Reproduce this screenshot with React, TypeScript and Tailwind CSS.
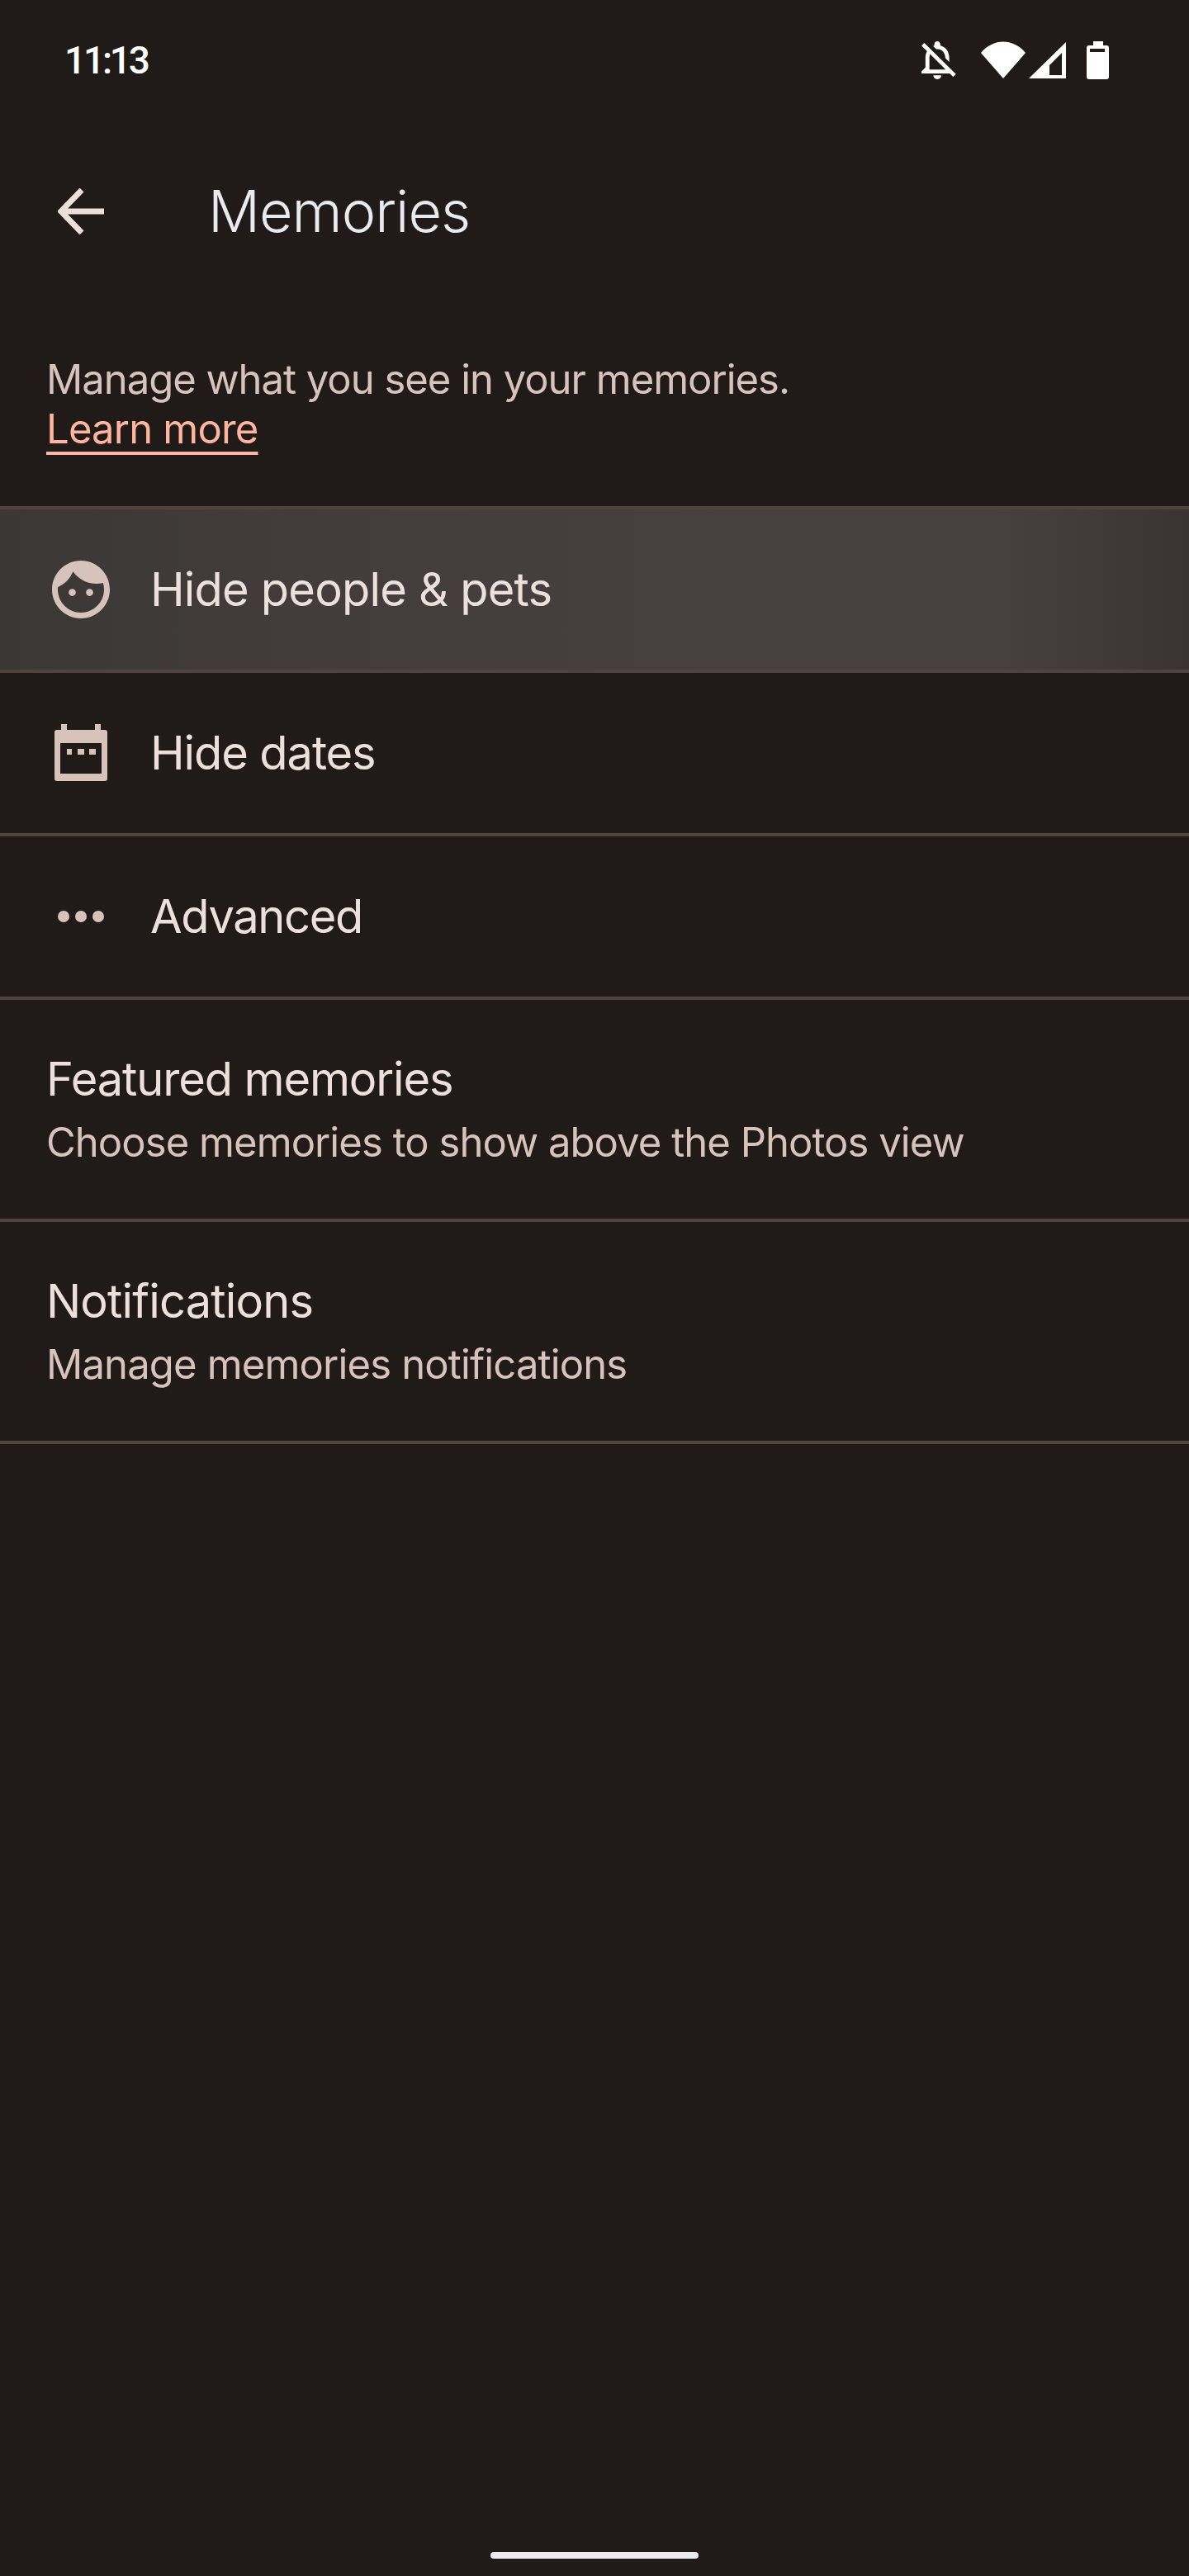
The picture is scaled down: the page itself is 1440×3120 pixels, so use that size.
import React from "react";

const Divider = () => <div className="h-1 w-full bg-[#524340]" />;

function FaceIcon() {
  return (
    <svg viewBox="0 0 24 24" className="h-[84px] w-[84px]" fill="#d8c2bc">
      <path d="M9 11.75c-.69 0-1.25.56-1.25 1.25s.56 1.25 1.25 1.25 1.25-.56 1.25-1.25-.56-1.25-1.25-1.25zm6 0c-.69 0-1.25.56-1.25 1.25s.56 1.25 1.25 1.25 1.25-.56 1.25-1.25-.56-1.25-1.25-1.25zM12 2C6.48 2 2 6.48 2 12s4.48 10 10 10 10-4.48 10-10S17.52 2 12 2zm0 18c-4.41 0-8-3.59-8-8 0-.29.02-.58.05-.86 2.36-1.05 4.23-2.98 5.21-5.37C11.07 8.33 14.05 10 17.42 10c.78 0 1.53-.09 2.25-.26.21.71.33 1.47.33 2.26 0 4.41-3.59 8-8 8z" />
    </svg>
  );
}

function CalendarIcon() {
  return (
    <svg viewBox="0 0 84 84" className="h-[84px] w-[84px]" fill="#d8c2bc" fillRule="evenodd">
      <path d="M18 7h7v7h34V7h7v7h5a3 3 0 0 1 3 3v56a3 3 0 0 1-3 3H13a3 3 0 0 1-3-3V17a3 3 0 0 1 3-3h5zM17 30v37h50V30z" />
      <rect x="25" y="37" width="6" height="7" />
      <rect x="38" y="37" width="8" height="7" />
      <rect x="52" y="37" width="8" height="7" />
    </svg>
  );
}

function DotsIcon() {
  return (
    <svg viewBox="0 0 84 84" className="h-[84px] w-[84px]" fill="#d8c2bc">
      <circle cx="21" cy="42" r="7" />
      <circle cx="42" cy="42" r="7" />
      <circle cx="63" cy="42" r="7" />
    </svg>
  );
}

function IconRow({ icon, label, className }: { icon: React.ReactNode; label: string; className?: string }) {
  return (
    <div className={`flex h-[194px] items-center pl-[56px] ${className ?? ""}`}>
      <div className="flex w-[126px] shrink-0 items-center">{icon}</div>
      <span className="text-[56px] font-normal leading-[72px] text-[#ede0dc]">{label}</span>
    </div>
  );
}

function TextRow({ title, sub, titleClass, subClass }: { title: string; sub: string; titleClass: string; subClass: string }) {
  return (
    <div className="flex h-[265px] flex-col justify-center px-[56px]">
      <div className={`text-[56px] font-normal leading-[72px] text-[#ede0dc] ${titleClass}`}>{title}</div>
      <div className={`mt-[8px] text-[49px] font-normal leading-[66px] text-[#d8c2bc] ${subClass}`}>{sub}</div>
    </div>
  );
}

export default function App() {
  return (
    <div
      className="flex h-[3120px] w-full flex-col overflow-hidden bg-[#201a18]"
      style={{ fontFamily: "Inter, Roboto, 'Liberation Sans', sans-serif" }}
    >
      <div className="flex h-[146px] shrink-0 items-center justify-between pl-[78px] pr-[97px]">
        <span className="text-[46px] font-medium leading-none tracking-[-3.2px] text-white" style={{ fontFamily: "Roboto, sans-serif" }}>
          11:13
        </span>
        <div className="flex items-center">
          <svg viewBox="4 2.5 17.5 19.5" className="h-[46px] w-[42px]" fill="#fff" preserveAspectRatio="none">
            <path d="M12 22c1.1 0 2-.9 2-2h-4c0 1.1.9 2 2 2zm0-15.5c2.49 0 4 2.02 4 4.5v.1l2 2V11c0-3.07-1.63-5.64-4.5-6.32V4c0-.83-.67-1.5-1.5-1.5s-1.5.67-1.5 1.5v.68c-.24.06-.47.15-.69.23l1.64 1.64c.18-.02.36-.05.55-.05zM5.41 3.35L4 4.76l2.81 2.81C6.29 8.57 6 9.74 6 11v5l-2 2v1h14.24l1.74 1.74 1.41-1.41L5.41 3.35zM16 17H8v-6c0-.68.12-1.32.34-1.9L16 16.76V17z" />
          </svg>
          <svg viewBox="0 0 54 46" className="ml-[30px] h-[46px] w-[54px]" fill="#fff">
            <path d="M0 14C15 -4 39 -4 54 14L27 45z" />
          </svg>
          <svg viewBox="0 0 46 46" className="ml-[4px] h-[46px] w-[46px]" fill="#fff" fillRule="evenodd">
            <path d="M45 1v44H0zM40 14L25 29v12h15z" />
          </svg>
          <svg viewBox="0 0 27 46" className="ml-[24px] h-[46px] w-[27px]" fill="#fff" fillRule="evenodd">
            <path d="M8 0h12v5h4a3 3 0 0 1 3 3v35a3 3 0 0 1-3 3H3a3 3 0 0 1-3-3V8a3 3 0 0 1 3-3h5zM4 9v4h18V9z" />
          </svg>
        </div>
      </div>

      <div className="flex h-[226px] shrink-0 items-center pb-[7px] pl-[70px]">
        <svg viewBox="0 0 56 56" className="h-[56px] w-[56px]" fill="none" stroke="#ede0dc" strokeWidth="7">
          <path d="M56 28H5M29 2L4 28l25 26" />
        </svg>
        <span className="ml-[126px] text-[70px] font-light leading-[84px] tracking-[-1px] text-[#e9eaee]">Memories</span>
      </div>

      <div className="h-[241px] shrink-0 px-[56px] pt-[58px] text-[49px] font-normal leading-[60px] text-[#d8c2bc]">
        <div className="tracking-[-1.02px]">Manage what you see in your memories.</div>
        <div className="tracking-[-0.82px] text-[#ffb5a0] underline decoration-[3.5px] underline-offset-[10px]">Learn more</div>
      </div>

      <Divider />
      <IconRow
        icon={<FaceIcon />}
        label="Hide people & pets"
        className="tracking-[-0.8px] bg-[linear-gradient(to_right,#3b3735_0%,#423d3c_25%,#464140_60%,#464140_84%,#413c3b_91%,#393433_100%)]"
      />
      <Divider />
      <IconRow icon={<CalendarIcon />} label="Hide dates" className="tracking-[-1.1px]" />
      <Divider />
      <IconRow icon={<DotsIcon />} label="Advanced" className="tracking-[-1.37px]" />
      <Divider />
      <TextRow title="Featured memories" sub="Choose memories to show above the Photos view" titleClass="tracking-[-1.14px]" subClass="tracking-[-0.95px]" />
      <Divider />
      <TextRow title="Notifications" sub="Manage memories notifications" titleClass="tracking-[-0.83px]" subClass="tracking-[-0.85px]" />
      <Divider />

      <div className="mt-auto flex justify-center pb-[21px]">
        <div className="h-2 w-[252px] rounded-full bg-[#ececec]" />
      </div>
    </div>
  );
}
